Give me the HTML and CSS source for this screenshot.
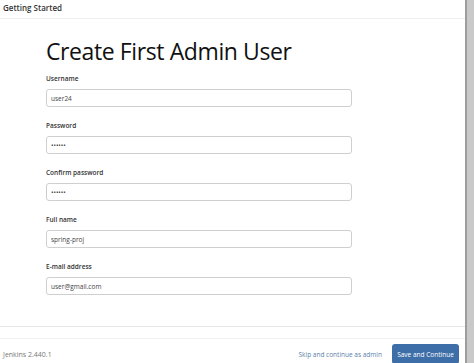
FILE: index.html
```html
<!DOCTYPE html>
<html lang="en">

<head>
    <meta charset="UTF-8">
    <meta name="viewport" content="width=device-width, initial-scale=1.0">
    <title>Getting Started</title>
    <link rel="stylesheet" href="styles.css">
</head>

<body>
    <div class="page">
        <div class="dialog">
            <div class="header">Getting Started</div>
            <div class="content">
                <h1>Create First Admin User</h1>
                <div class="field">
                    <label>Username</label>
                    <input type="text" value="user24">
                </div>
                <div class="field">
                    <label>Password</label>
                    <input type="password" value="aaaaaa">
                </div>
                <div class="field">
                    <label>Confirm password</label>
                    <input type="password" value="aaaaaa">
                </div>
                <div class="field">
                    <label>Full name</label>
                    <input type="text" value="spring-proj">
                </div>
                <div class="field">
                    <label>E-mail address</label>
                    <input type="text" value="user@gmail.com">
                </div>
            </div>
            <div class="footer">
                <span class="version">Jenkins 2.440.1</span>
                <div class="actions">
                    <a class="skip">Skip and continue as admin</a>
                    <button class="save">Save and Continue</button>
                </div>
            </div>
        </div>
        <div class="scroll"></div>
    </div>
</body>

</html>
```

FILE: styles.css
```css
* {
    margin: 0;
    padding: 0;
    box-sizing: border-box;
    font-family: 'Open Sans', sans-serif;
}

body {
    background-color: #fff;
    color: #333;
}

.page {
    display: flex;
    width: 474px;
    height: 363px;
    overflow: hidden;
}

.dialog {
    flex: 1;
    display: flex;
    flex-direction: column;
    background: #fff;
}

.scroll {
    width: 9px;
    background: #c9c9c9;
    border-left: 2px solid #9d9d9d;
}

.header {
    flex-shrink: 0;
    height: 19px;
    padding: 2px 3px;
    font-size: 8px;
    font-weight: 600;
    color: #333;
    border-bottom: 1px solid #eee;
}

.content {
    flex-shrink: 0;
    height: 308px;
    padding: 17px 0 0 46px;
    border-bottom: 1px solid #e6e6e6;
}

h1 {
    font-size: 23px;
    font-weight: 400;
    color: #111;
    line-height: 30px;
    letter-spacing: -0.4px;
    margin-bottom: 8px;
}

.field {
    margin-bottom: 14px;
}

.field label {
    display: block;
    font-size: 6.5px;
    font-weight: 600;
    color: #333;
    line-height: 10px;
    margin-bottom: 5px;
}

.field input {
    display: block;
    width: 306px;
    height: 18px;
    border: 1px solid #cfcfcf;
    border-radius: 3px;
    padding: 0 4px;
    font-size: 6.5px;
    color: #444;
    outline: 0;
}

.footer {
    flex-shrink: 0;
    height: 25px;
    margin-top: 11px;
    border-top: 1px solid #f2f2f2;
    display: flex;
    align-items: center;
    justify-content: space-between;
    padding: 6px 6px 0 3px;
}

.version {
    font-size: 7px;
    color: #777;
}

.actions {
    display: flex;
    align-items: center;
    gap: 10px;
}

.skip {
    font-size: 6.5px;
    color: #5c7fa8;
}

.save {
    border: 0;
    border-radius: 3px;
    background: #3d6ea8;
    color: #fff;
    font-size: 6.5px;
    height: 20px;
    width: 67px;
}
```
